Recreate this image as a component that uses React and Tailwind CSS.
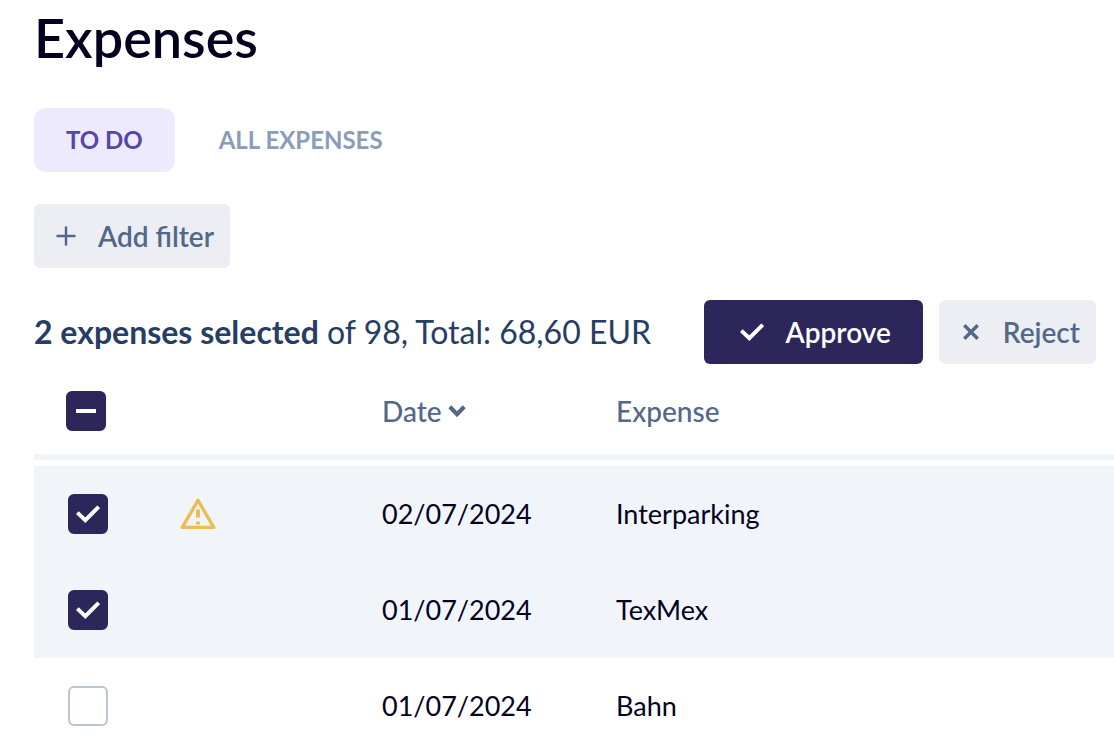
import { useEffect, useRef } from "react";

const expenses = [
  { id: 1, date: "02/07/2024", name: "Interparking", selected: true, warning: true },
  { id: 2, date: "01/07/2024", name: "TexMex", selected: true, warning: false },
  { id: 3, date: "01/07/2024", name: "Bahn", selected: false, warning: false },
];

function CheckIcon({ className = "" }) {
  return (
    <svg viewBox="0 0 24 18" aria-hidden="true" className={`h-[18px] w-6 ${className}`}>
      <path d="M1.3 7.6 9.3 15.2 22.7 1.8" fill="none" stroke="currentColor" strokeWidth="4" />
    </svg>
  );
}

function WarningIcon() {
  return (
    <svg viewBox="0 0 36 32" role="img" aria-label="Warning" className="h-8 w-9">
      <path d="M18 2.4 33.8 29.4H2.2Z" fill="none" stroke="#ecbd55" strokeWidth="3.4" strokeLinejoin="round" />
      <path d="M16 11.5h4v8h-4zM16 23.5h4v3h-4z" fill="#ecbd55" />
    </svg>
  );
}

function Checkbox({ label, indeterminate = false, defaultChecked = false }) {
  const ref = useRef(null);
  useEffect(() => {
    ref.current.indeterminate = indeterminate;
  }, [indeterminate]);
  return (
    <label className="grid size-10 place-items-center">
      <input
        ref={ref}
        type="checkbox"
        aria-label={label}
        defaultChecked={defaultChecked}
        className="peer col-start-1 row-start-1 size-10 appearance-none rounded-md border-2 border-[#b9c5d5] bg-white checked:border-[#2c265b] checked:bg-[#2c265b] indeterminate:border-[#2c265b] indeterminate:bg-[#2c265b]"
      />
      <CheckIcon className="pointer-events-none z-10 col-start-1 row-start-1 hidden text-white peer-checked:block" />
      <span className="pointer-events-none z-10 col-start-1 row-start-1 hidden h-1 w-5 bg-white peer-indeterminate:block" />
    </label>
  );
}

export default function App() {
  return (
    <main className="overflow-hidden bg-white pt-2 pl-[34px] font-[Lato,sans-serif] text-[#02021f]">
      <h1 className="text-[54px] leading-[60px] font-semibold">Expenses</h1>

      <div role="tablist" className="mt-10 flex gap-3">
        <button role="tab" aria-selected="true" className="h-16 rounded-xl bg-[#eeeafe] px-8 text-2xl font-bold text-[#5546ab]">
          TO DO
        </button>
        <button role="tab" aria-selected="false" className="h-16 rounded-xl px-8 text-2xl font-bold text-[#8a9cb9]">
          ALL EXPENSES
        </button>
      </div>

      <button className="mt-8 flex h-16 items-center gap-[22px] rounded-md bg-[#edeef3] pr-4 pl-[22px] text-[28px] font-semibold text-[#516889]">
        <svg viewBox="0 0 20 20" aria-hidden="true" className="size-5">
          <path d="M10 .5v19M.5 10h19" stroke="currentColor" strokeWidth="2.4" />
        </svg>
        Add filter
      </button>

      <div className="mt-8 flex items-center justify-between pr-[18px] whitespace-nowrap">
        <p className="text-[32px] leading-10 text-[#263d66]">
          <strong className="font-bold">2 expenses selected</strong> of 98, Total: 68,60 EUR
        </p>
        <div className="flex gap-4 text-[28px] font-semibold">
          <button className="flex h-16 items-center gap-[22px] rounded-md bg-[#2c265b] pr-8 pl-9 text-white">
            <CheckIcon />
            Approve
          </button>
          <button className="flex h-16 items-center gap-6 rounded-md bg-[#edeef3] pr-4 pl-6 text-[#516889]">
            <svg viewBox="0 0 16 16" aria-hidden="true" className="size-4">
              <path d="m1.3 1.3 13.4 13.4M14.7 1.3 1.3 14.7" stroke="currentColor" strokeWidth="3.4" />
            </svg>
            Reject
          </button>
        </div>
      </div>

      <table className="w-full table-fixed border-collapse text-left text-[27px]">
        <colgroup>
          <col className="w-[146px]" />
          <col className="w-[202px]" />
          <col className="w-[234px]" />
          <col />
        </colgroup>
        <thead className="text-[28px] text-[#516889]">
          <tr className="h-[93px] border-b-6 border-[#f1f5fa]">
            <th className="pt-1 pl-8 font-normal">
              <Checkbox label="Select all expenses" indeterminate />
            </th>
            <td />
            <th aria-sort="descending" className="pt-1 font-medium">
              <button className="flex items-center gap-1.5">
                Date
                <svg viewBox="0 0 18 12" aria-hidden="true" className="h-3 w-[18px]">
                  <path d="m1.8 1.8 7.2 7.4 7.2-7.4" fill="none" stroke="currentColor" strokeWidth="4.2" />
                </svg>
              </button>
            </th>
            <th className="pt-1 font-medium">Expense</th>
          </tr>
        </thead>
        <tbody className="before:block before:h-1.5 before:content-['']">
          {expenses.map((expense) => (
            <tr key={expense.id} className="h-24 has-checked:bg-[#f1f5fa]">
              <td className="pl-[34px]">
                <Checkbox label={`Select ${expense.name}`} defaultChecked={expense.selected} />
              </td>
              <td>{expense.warning && <WarningIcon />}</td>
              <td>{expense.date}</td>
              <td>{expense.name}</td>
            </tr>
          ))}
        </tbody>
      </table>
    </main>
  );
}
